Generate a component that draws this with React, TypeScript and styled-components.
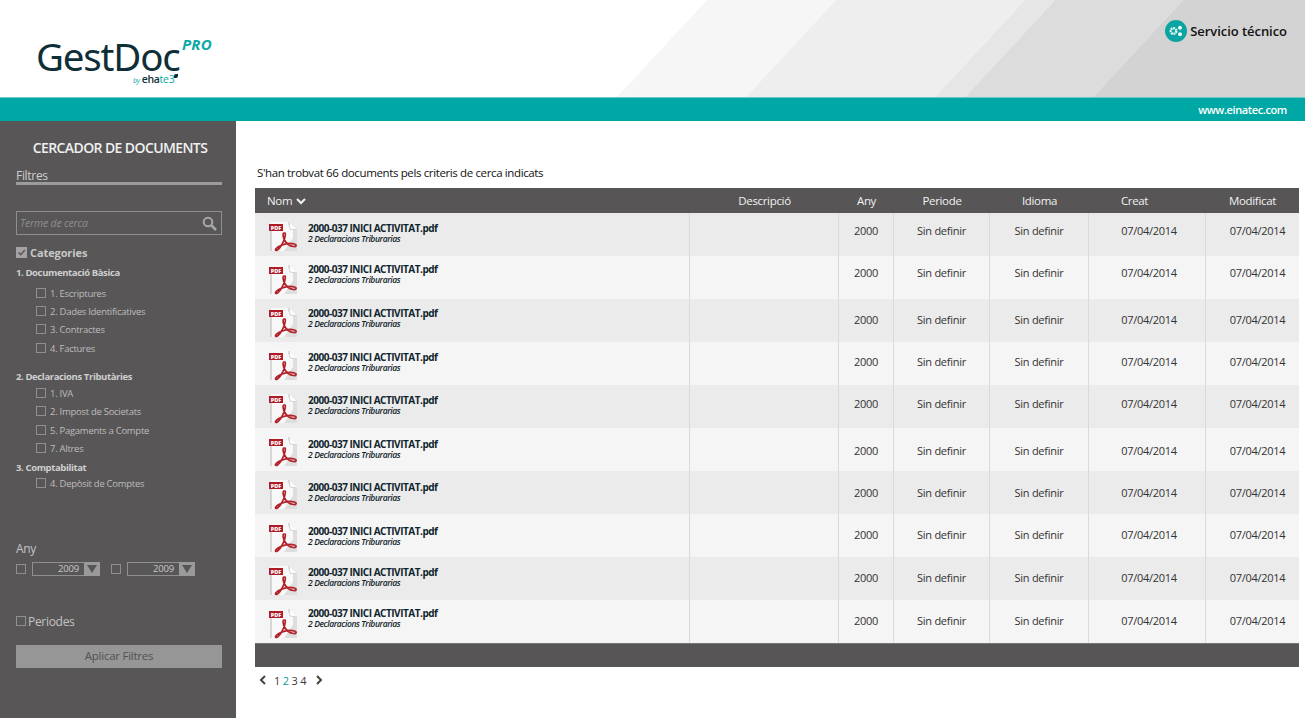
import { createGlobalStyle } from "styled-components"
import styled from "styled-components"

const GlobalStyle = createGlobalStyle`
  html, body { margin: 0; padding: 0; background: #fff; }
  body { font-family: "Open Sans", "Noto Sans", sans-serif; overflow: hidden; }
  * { box-sizing: border-box; }
`

const COLUMNS = "435px 149px 55px 96px 99px 117px 93px"

const Page = styled.div`
  width: 1305px;
  height: 718px;
  display: flex;
  flex-direction: column;
  overflow: hidden;
`

const Header = styled.header`
  position: relative;
  height: 97px;
  flex: none;
  background: #fff;
  display: flex;
  justify-content: space-between;
`

const Diagonals = styled.svg`
  position: absolute;
  inset: 0;
`

const Logo = styled.div`
  position: relative;
  margin: 41px 0 0 36px;
  width: 180px;
  height: 46px;
`

const LogoName = styled.div`
  font-family: "Noto Sans", sans-serif;
  font-size: 38.5px;
  line-height: 30px;
  letter-spacing: -1.2px;
  color: #0f2f38;
`

const LogoPro = styled.span`
  position: absolute;
  left: 146px;
  top: -5px;
  font-family: "Open Sans", sans-serif;
  font-size: 15px;
  line-height: 16px;
  font-weight: 700;
  font-style: italic;
  letter-spacing: 0.2px;
  color: #0aa9a5;
`

const LogoBy = styled.span`
  position: absolute;
  left: 97px;
  top: 32px;
  display: flex;
  align-items: baseline;
  font-size: 10.5px;
  line-height: 12px;
  color: #0f2f38;
  letter-spacing: -0.3px;
  white-space: nowrap;

  em { font-size: 7px; color: #0aa9a5; margin-right: 2px; }
  b { font-weight: 600; }
  i { font-style: normal; color: #0aa9a5; }
  svg { align-self: flex-start; margin-top: 1px; }
`

const Support = styled.div`
  position: relative;
  display: flex;
  align-items: center;
  gap: 3px;
  margin: 20px 18px 0 0;
  height: 22px;
  font-size: 13px;
  font-weight: 600;
  letter-spacing: -0.05px;
  color: #111;
`

const TealBar = styled.div`
  height: 24px;
  flex: none;
  background: #00a8a5;
  border-top: 1px solid #6cc9c6;
  display: flex;
  align-items: center;
  justify-content: flex-end;
  padding-right: 18px;
  font-size: 11px;
  font-weight: 600;
  letter-spacing: -0.38px;
  color: #fff;
`

const Body = styled.div`
  flex: 1;
  display: flex;
  min-height: 0;
`

const Sidebar = styled.aside`
  width: 236px;
  flex: none;
  background: #585657;
  padding: 18px 14px 0 16px;
  color: #c4c4c4;
`

const SideTitle = styled.h2`
  margin: 0 0 10px;
  padding-left: 2px;
  font-size: 14px;
  line-height: 18px;
  font-weight: 600;
  letter-spacing: -0.6px;
  text-align: center;
  color: #f0f0f0;
`

const FilterLabel = styled.div`
  font-size: 12px;
  line-height: 16px;
  letter-spacing: -0.3px;
  color: #cfcfcf;
  border-bottom: 3px solid #9c9c9c;
  height: 18px;
  padding-top: 1px;
  margin-bottom: 26px;
`

const SearchBox = styled.div`
  height: 24px;
  border: 1px solid #8e8e8e;
  display: flex;
  align-items: center;
  justify-content: space-between;
  padding: 0 4px 0 3px;
  font-size: 10.5px;
  font-style: italic;
  letter-spacing: -0.2px;
  color: #8f8f8f;
  margin-bottom: 10px;
`

const CategoryRow = styled.div`
  display: flex;
  align-items: center;
  gap: 3px;
  height: 14px;
  font-size: 11px;
  font-weight: 700;
  letter-spacing: -0.1px;
  color: #c8c8c8;
`

const CheckedBox = styled.span`
  width: 11px;
  height: 11px;
  background: #a3a3a3;
  display: flex;
`

const GroupTitle = styled.div<{ $top: number }>`
  margin-top: ${({ $top }) => $top}px;
  height: 14px;
  font-size: 9.5px;
  line-height: 14px;
  font-weight: 700;
  letter-spacing: -0.38px;
  color: #cfcfcf;
`

const Item = styled.div<{ $top: number }>`
  margin-top: ${({ $top }) => $top}px;
  margin-left: 20px;
  display: flex;
  align-items: center;
  gap: 4px;
  height: 14px;
  font-size: 9.5px;
  letter-spacing: -0.28px;
  color: #bdbdbd;
`

const Box = styled.span`
  width: 10px;
  height: 10px;
  flex: none;
  border: 1px solid #8f8f8f;
`

const AnyLabel = styled.div`
  margin-top: 50px;
  height: 18px;
  font-size: 12px;
  line-height: 18px;
  letter-spacing: -0.3px;
  color: #c4c4c4;
`

const YearRow = styled.div`
  margin-top: 3px;
  display: flex;
  align-items: center;
  height: 15px;
`

const YearSelect = styled.div`
  width: 68px;
  height: 14px;
  margin: 0 11px 0 6px;
  border: 1px solid #8f8f8f;
  display: flex;
  justify-content: space-between;
  font-size: 9.5px;
  line-height: 12px;
  letter-spacing: -0.2px;
  color: #c8c8c8;
  padding-left: 25px;
`

const YearArrow = styled.span`
  width: 16px;
  margin: -1px -1px -1px 0;
  background: #9a9a9a;
  display: flex;
  align-items: center;
  justify-content: center;
`

const PeriodRow = styled.div`
  margin-top: 37px;
  display: flex;
  align-items: center;
  gap: 2px;
  height: 16px;
  font-size: 12px;
  letter-spacing: -0.3px;
  color: #c4c4c4;
`

const ApplyButton = styled.div`
  margin-top: 16px;
  height: 23px;
  background: #969696;
  text-align: center;
  font-size: 11.5px;
  line-height: 22px;
  letter-spacing: -0.25px;
  color: #525252;
`

const Main = styled.main`
  flex: 1;
  min-width: 0;
  padding: 44px 6px 0 19px;
`

const Summary = styled.p`
  margin: 0 0 7px 2px;
  height: 16px;
  font-size: 11.5px;
  line-height: 16px;
  letter-spacing: -0.37px;
  color: #111;
`

const HeadRow = styled.div`
  display: grid;
  grid-template-columns: ${COLUMNS};
  height: 25px;
  background: #575556;
  color: #f2f2f2;
  font-size: 11.5px;
  letter-spacing: -0.33px;
`

const HeadCell = styled.div<{ $shift?: number }>`
  display: flex;
  align-items: center;
  justify-content: center;
  padding-right: ${({ $shift }) => $shift ?? 0}px;
`

const NameHead = styled(HeadCell)`
  justify-content: flex-start;
  gap: 4px;
  padding-left: 12px;
`

const Row = styled.div<{ $odd: boolean }>`
  display: grid;
  grid-template-columns: ${COLUMNS};
  height: 43px;
  background: ${({ $odd }) => ($odd ? "#ebebeb" : "#f5f5f5")};
`

const NameCell = styled.div`
  display: flex;
  gap: 9px;
  padding: 7px 0 0 13px;
  border-right: 1px solid #dadada;
`

const NameText = styled.div<{ $top: number }>`
  padding-top: ${({ $top }) => $top}px;
`

const FileName = styled.div`
  font-size: 10px;
  line-height: 12px;
  font-weight: 700;
  letter-spacing: -0.48px;
  color: #10242c;
`

const FileCategory = styled.div`
  font-size: 8.5px;
  line-height: 10px;
  font-weight: 600;
  font-style: italic;
  letter-spacing: -0.38px;
  color: #10242c;
`

const DataCell = styled.div<{ $top: number; $shift?: number }>`
  padding-top: ${({ $top }) => $top - 8}px;
  padding-left: ${({ $shift }) => $shift ?? 0}px;
  text-align: center;
  font-size: 11px;
  line-height: 16px;
  letter-spacing: -0.27px;
  color: #333;
  border-right: 1px solid #dadada;

  &:last-child { border-right: none; }
`

const TableFoot = styled.div`
  height: 24px;
  background: #575556;
  border-top: 1px solid #777;
`

const Pager = styled.nav`
  display: flex;
  align-items: center;
  height: 26px;
  padding-left: 4px;
  font-size: 11px;
  letter-spacing: -0.2px;
  color: #3a3a3a;
`

const PagerNumbers = styled.span`
  margin: 0 8px 0 5px;
`

const CurrentPage = styled.span`
  color: #0a9b98;
`

const bands = [
  { x: 617, w: 129, fill: "#f6f6f6" },
  { x: 746, w: 189, fill: "#eeeeee" },
  { x: 935, w: 30, fill: "#e6e6e6" },
  { x: 965, w: 128, fill: "#dcdcdc" },
  { x: 1093, w: 212, fill: "#d3d3d3" },
]

// Row nudges measured from the picture, the text does not sit at the same height in every row
const rows = [
  { name: 2, data: 18 },
  { name: 0, data: 17 },
  { name: 1, data: 21 },
  { name: 2, data: 20 },
  { name: 2, data: 19 },
  { name: 3, data: 23 },
  { name: 3, data: 22 },
  { name: 4, data: 21 },
  { name: 2, data: 21 },
  { name: 0, data: 21 },
]

function PdfIcon() {
  return (
    <svg width="31" height="32" viewBox="0 0 31 32" style={{ flex: "none" }}>
      <path d="M3 2h18l8 8v21H3z" fill="#dedede" />
      <path d="M3 2h17v3l5 5v8L16 31H3z" fill="#f8f8f8" />
      <path d="M3 4v27" stroke="#b5b5b5" strokeWidth="1" />
      <path d="M21 2l1 7 7 1" fill="#fff" stroke="#c9c9c9" strokeWidth="0.8" />
      <rect x="1" y="4" width="14" height="7" fill="#b01c25" />
      <text x="8" y="9.800" textAnchor="middle" fontSize="5.500" fontWeight="800" fill="#fff" fontFamily="Open Sans">
        PDF
      </text>
      <path
        d="M16 13c-1.500 0-1 4 .5 7 1.500 3 5 6 9 6.500 3 .3 3.500-1.800 1-2.500-3.500-1-9-.5-13 1.200-3.500 1.500-6.500 3.800-6 5 .5 1 3-.5 5-3.500 2.500-3.800 4.500-9 4.800-11.700.1-1.300-.1-2-.3-2z"
        fill="none"
        stroke="#b3222b"
        strokeWidth="1.700"
      />
    </svg>
  )
}

function Chevron({ dir, color }: { dir: "left" | "right" | "down"; color: string }) {
  const d = dir === "left" ? "M6 1L2 5l4 4" : dir === "right" ? "M3 1l4 4-4 4" : "M1 3l4 4 4-4"
  return (
    <svg width="10" height="10" viewBox="0 0 10 10">
      <path d={d} fill="none" stroke={color} strokeWidth="2" />
    </svg>
  )
}

function YearPicker() {
  return (
    <YearSelect>
      2009
      <YearArrow>
        <svg width="10" height="8" viewBox="0 0 10 8">
          <path d="M0 0h10L5 8z" fill="#555" />
        </svg>
      </YearArrow>
    </YearSelect>
  )
}

export default function App() {
  return (
    <Page>
      <GlobalStyle />
      <Header>
        <Diagonals width="1305" height="97" viewBox="0 0 1305 97">
          {bands.map((b) => (
            <polygon
              key={b.x}
              points={`${b.x},97 ${b.x + 90},0 ${b.x + 90 + b.w},0 ${b.x + b.w},97`}
              fill={b.fill}
            />
          ))}
          <rect x="1183" width="122" height="97" fill="#d3d3d3" />
        </Diagonals>
        <Logo>
          <LogoName>GestDoc</LogoName>
          <LogoPro>PRO</LogoPro>
          <LogoBy>
            <em>by</em>
            <b>eha</b>
            <i>te3</i>
            <svg width="4" height="4" viewBox="0 0 4 4">
              <path d="M0 4V2a2 2 0 0 1 2-2h2v2a2 2 0 0 1-2 2z" fill="#0f2f38" />
            </svg>
          </LogoBy>
        </Logo>
        <Support>
          <svg width="22" height="22" viewBox="0 0 22 22">
            <circle cx="11" cy="11" r="11" fill="#0aa5a2" />
            <circle cx="8.500" cy="11" r="2.800" fill="none" stroke="#eef8f8" strokeWidth="2.400" strokeDasharray="1.800 0.700" />
            <circle cx="15" cy="7.800" r="2" fill="#eef8f8" />
            <circle cx="15" cy="14.200" r="2" fill="#eef8f8" />
          </svg>
          Servicio técnico
        </Support>
      </Header>
      <TealBar>www.einatec.com</TealBar>
      <Body>
        <Sidebar>
          <SideTitle>CERCADOR DE DOCUMENTS</SideTitle>
          <FilterLabel>Filtres</FilterLabel>
          <SearchBox>
            Terme de cerca
            <svg width="15" height="15" viewBox="0 0 15 15">
              <circle cx="6" cy="6" r="4.300" fill="none" stroke="#a8a8a8" strokeWidth="2" />
              <path d="M9.500 9.500L14 14" stroke="#a8a8a8" strokeWidth="2.500" />
            </svg>
          </SearchBox>
          <CategoryRow>
            <CheckedBox>
              <svg width="11" height="11" viewBox="0 0 11 11">
                <path d="M2.500 5.500l2.200 2.200L8.800 3" fill="none" stroke="#585657" strokeWidth="1.500" />
              </svg>
            </CheckedBox>
            Categories
          </CategoryRow>
          <GroupTitle $top={7}>1. Documentació Bàsica</GroupTitle>
          <Item $top={6}><Box />1. Escriptures</Item>
          <Item $top={4}><Box />2. Dades Identificatives</Item>
          <Item $top={4}><Box />3. Contractes</Item>
          <Item $top={5}><Box />4. Factures</Item>
          <GroupTitle $top={15}>2. Declaracions Tributàries</GroupTitle>
          <Item $top={2}><Box />1. IVA</Item>
          <Item $top={4}><Box />2. Impost de Societats</Item>
          <Item $top={5}><Box />5. Pagaments a Compte</Item>
          <Item $top={4}><Box />7. Altres</Item>
          <GroupTitle $top={6}>3. Comptabilitat</GroupTitle>
          <Item $top={1}><Box />4. Depòsit de Comptes</Item>
          <AnyLabel>Any</AnyLabel>
          <YearRow>
            <Box />
            <YearPicker />
            <Box />
            <YearPicker />
          </YearRow>
          <PeriodRow>
            <Box />
            Periodes
          </PeriodRow>
          <ApplyButton>Aplicar Filtres</ApplyButton>
        </Sidebar>
        <Main>
          <Summary>S'han trobvat 66 documents pels criteris de cerca indicats</Summary>
          <HeadRow>
            <NameHead>
              Nom <Chevron dir="down" color="#f2f2f2" />
            </NameHead>
            <HeadCell>Descripció</HeadCell>
            <HeadCell>Any</HeadCell>
            <HeadCell>Periode</HeadCell>
            <HeadCell>Idioma</HeadCell>
            <HeadCell $shift={26}>Creat</HeadCell>
            <HeadCell>Modificat</HeadCell>
          </HeadRow>
          {rows.map((row, i) => (
            <Row key={i} $odd={i % 2 === 0}>
              <NameCell>
                <PdfIcon />
                <NameText $top={row.name}>
                  <FileName>2000-037 INICI ACTIVITAT.pdf</FileName>
                  <FileCategory>2 Declaracions Triburarias</FileCategory>
                </NameText>
              </NameCell>
              <DataCell $top={row.data} />
              <DataCell $top={row.data}>2000</DataCell>
              <DataCell $top={row.data}>Sin definir</DataCell>
              <DataCell $top={row.data}>Sin definir</DataCell>
              <DataCell $top={row.data} $shift={4}>07/04/2014</DataCell>
              <DataCell $top={row.data} $shift={10}>07/04/2014</DataCell>
            </Row>
          ))}
          <TableFoot />
          <Pager>
            <Chevron dir="left" color="#444" />
            <PagerNumbers>
              1 <CurrentPage>2</CurrentPage> 3 4
            </PagerNumbers>
            <Chevron dir="right" color="#444" />
          </Pager>
        </Main>
      </Body>
    </Page>
  )
}
